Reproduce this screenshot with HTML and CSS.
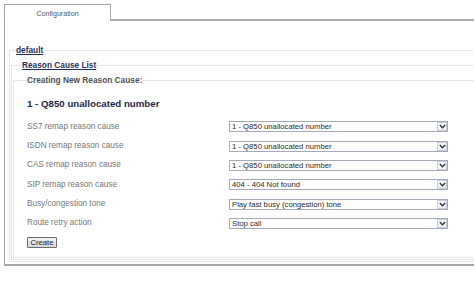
FILE: index.html
```html
<!DOCTYPE html>
<html>
<head>
<meta charset="utf-8">
<link rel="stylesheet" href="styles.css">
</head>
<body>
<div class="page">
  <div class="tabs">
    <div class="tab">Configuration</div>
    <div class="tab-fill"></div>
  </div>
  <div class="panel">
    <fieldset class="fs fs1">
      <legend class="lg lg1"><a class="lnk">default</a></legend>
      <fieldset class="fs fs2">
        <legend class="lg lg2"><a class="lnk">Reason Cause List</a></legend>
        <fieldset class="fs fs3">
          <legend class="lg lg3">Creating New Reason Cause:</legend>
          <h2 class="title">1 - Q850 unallocated number</h2>
          <div class="form">
            <div class="lbl">SS7 remap reason cause</div>
            <div class="sel"><select class="ctl"><option>1 - Q850 unallocated number</option></select><span class="arr"><svg width="7" height="5" viewBox="0 0 7 5"><path d="M0.8 1 L3.5 3.8 L6.2 1" fill="none" stroke="#333" stroke-width="1.3"/></svg></span></div>
            <div class="lbl">ISDN remap reason cause</div>
            <div class="sel"><select class="ctl"><option>1 - Q850 unallocated number</option></select><span class="arr"><svg width="7" height="5" viewBox="0 0 7 5"><path d="M0.8 1 L3.5 3.8 L6.2 1" fill="none" stroke="#333" stroke-width="1.3"/></svg></span></div>
            <div class="lbl">CAS remap reason cause</div>
            <div class="sel"><select class="ctl"><option>1 - Q850 unallocated number</option></select><span class="arr"><svg width="7" height="5" viewBox="0 0 7 5"><path d="M0.8 1 L3.5 3.8 L6.2 1" fill="none" stroke="#333" stroke-width="1.3"/></svg></span></div>
            <div class="lbl">SIP remap reason cause</div>
            <div class="sel"><select class="ctl"><option>404 - 404 Not found</option></select><span class="arr"><svg width="7" height="5" viewBox="0 0 7 5"><path d="M0.8 1 L3.5 3.8 L6.2 1" fill="none" stroke="#333" stroke-width="1.3"/></svg></span></div>
            <div class="lbl">Busy/congestion tone</div>
            <div class="sel"><select class="ctl"><option>Play fast busy (congestion) tone</option></select><span class="arr"><svg width="7" height="5" viewBox="0 0 7 5"><path d="M0.8 1 L3.5 3.8 L6.2 1" fill="none" stroke="#333" stroke-width="1.3"/></svg></span></div>
            <div class="lbl">Route retry action</div>
            <div class="sel"><select class="ctl"><option>Stop call</option></select><span class="arr"><svg width="7" height="5" viewBox="0 0 7 5"><path d="M0.8 1 L3.5 3.8 L6.2 1" fill="none" stroke="#333" stroke-width="1.3"/></svg></span></div>
          </div>
          <button class="btn">Create</button>
        </fieldset>
      </fieldset>
    </fieldset>
  </div>
</div>
</body>
</html>
```
FILE: styles.css
```css
html, body {
  margin: 0;
  padding: 0;
  background: #fff;
  overflow: hidden;
}
body {
  font-family: "Liberation Sans", Arial, sans-serif;
  color: #333;
}
.page {
  padding: 4px 0 0 4px;
  width: 470px;
}
.tabs {
  display: flex;
  height: 17px;
}
.tab {
  width: 105px;
  height: 15px;
  padding-top: 1px;
  border: 1px solid #a8a8a8;
  border-bottom: none;
  font-size: 7.1px;
  line-height: 17px;
  color: #555;
  text-align: center;
}
.tab-fill {
  flex: 1;
  border-bottom: 2px solid #ababab;
  height: 15px;
}
.panel {
  border-left: 1px solid #a0a0a0;
  border-bottom: 2px solid #a8a8a8;
  padding: 24px 0 2px 4px;
}
.fs {
  border: 1px solid #e6e6e6;
  border-right: none;
  margin: 0;
  padding: 0 0 1px 0;
  min-width: 0;
}
.fs2, .fs3 {
  margin: 5px 0 0 1px;
}
.lg {
  font-size: 8.3px;
  line-height: 10px;
  font-weight: bold;
  padding: 0;
}
.lg1 { margin-left: 6px; }
.lg2 { margin-left: 10px; }
.lg3 { margin-left: 0; color: #505050; }
.lnk {
  color: #1f2f5c;
  text-decoration: underline;
}
.fs3 {
  padding: 0 0 9px 13px;
}
.title {
  margin: 13px 0 0 0;
  font-size: 9.7px;
  line-height: 12px;
  font-weight: bold;
  color: #1c2946;
}
.form {
  margin-top: 7px;
  display: grid;
  grid-template-columns: 202px 219px;
  grid-auto-rows: 19.35px;
  align-items: center;
}
.lbl {
  font-size: 8.2px;
  color: #767676;
  line-height: 10px;
}
.sel {
  position: relative;
  height: 11px;
}
.ctl {
  appearance: none;
  -webkit-appearance: none;
  width: 219px;
  height: 11px;
  margin: 0;
  padding: 0 0 0 2px;
  border: 1px solid #a3abbb;
  border-radius: 0;
  background: #fff;
  font-family: "Liberation Sans", Arial, sans-serif;
  font-size: 7.7px;
  line-height: 9px;
  color: #2a2a2a;
  display: block;
}
.arr {
  position: absolute;
  right: 1px;
  top: 1px;
  width: 8px;
  height: 7px;
  border: 1px solid #c8ccd4;
  background: #f3f5f8;
  display: flex;
  align-items: center;
  justify-content: center;
}
.arr svg {
  display: block;
}
.btn {
  margin-top: 4px;
  width: 30px;
  height: 11px;
  padding: 0;
  border: 1px solid #6b6b6b;
  border-radius: 1px;
  background: linear-gradient(#eef1f5, #d3d9e1);
  font-family: "Liberation Sans", Arial, sans-serif;
  font-size: 7.7px;
  line-height: 9px;
  color: #1e1e1e;
  display: block;
}
```
